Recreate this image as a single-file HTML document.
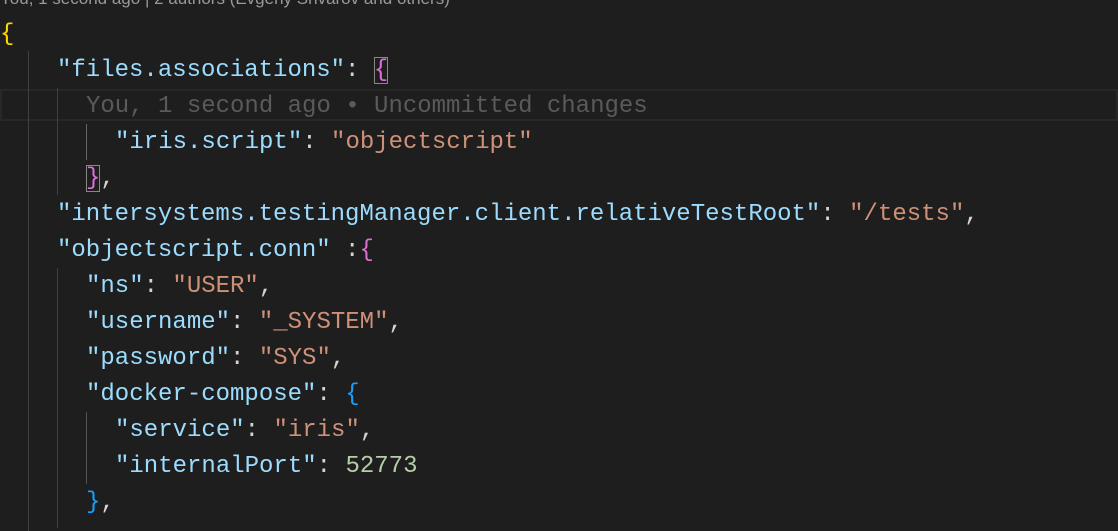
<!DOCTYPE html>
<html><head><style>
body{margin:0;width:1118px;height:524px;background:#1e1e1e;overflow:hidden;position:relative;font-family:"Liberation Mono",monospace;font-size:24px;}
.l{position:absolute;left:0;height:36px;line-height:36px;white-space:pre;color:#d4d4d4;margin-top:2px}
.k{color:#9cdcfe}.s{color:#ce9178}.n{color:#b5cea8}.y{color:#ffd700}.p{color:#da70d6}.b{color:#179fff}
.g{position:absolute;width:1px;background:#404040}
.box{outline:1px solid #888;outline-offset:-1px}
.top{position:absolute;left:0;top:-11px;font-family:"Liberation Sans",sans-serif;font-size:17px;color:#999;white-space:pre}
</style></head><body>
<div class="top">You, 1 second ago | 2 authors (Evgeny Shvarov and others)</div>
<div style="position:absolute;left:0;top:89px;width:1118px;height:32px;border:2px solid #282828;box-sizing:border-box"></div>
<div class="g" style="left:28px;top:51px;height:480px"></div>
<div class="g" style="left:57px;top:88px;height:107px"></div>
<div class="g" style="left:86px;top:124px;height:36px;background:#666"></div>
<div class="g" style="left:57px;top:268px;height:260px"></div>
<div class="g" style="left:86px;top:412px;height:72px;background:#555"></div>
<div class="l" style="top:15px"><span class="y">{</span></div>
<div class="l" style="top:51px;left:57px"><span class="k">"files.associations"</span>: <span class="p box">{</span></div>
<div class="l" style="top:87px;left:86px;color:#5a5a5a">You, 1 second ago • Uncommitted changes</div>
<div class="l" style="top:123px;left:115px"><span class="k">"iris.script"</span>: <span class="s">"objectscript"</span></div>
<div class="l" style="top:159px;left:86px"><span class="p box">}</span>,</div>
<div class="l" style="top:195px;left:57px"><span class="k">"intersystems.testingManager.client.relativeTestRoot"</span>: <span class="s">"/tests"</span>,</div>
<div class="l" style="top:231px;left:57px"><span class="k">"objectscript.conn"</span> :<span class="p">{</span></div>
<div class="l" style="top:267px;left:86px"><span class="k">"ns"</span>: <span class="s">"USER"</span>,</div>
<div class="l" style="top:303px;left:86px"><span class="k">"username"</span>: <span class="s">"_SYSTEM"</span>,</div>
<div class="l" style="top:339px;left:86px"><span class="k">"password"</span>: <span class="s">"SYS"</span>,</div>
<div class="l" style="top:375px;left:86px"><span class="k">"docker-compose"</span>: <span class="b">{</span></div>
<div class="l" style="top:411px;left:115px"><span class="k">"service"</span>: <span class="s">"iris"</span>,</div>
<div class="l" style="top:447px;left:115px"><span class="k">"internalPort"</span>: <span class="n">52773</span></div>
<div class="l" style="top:483px;left:86px"><span class="b">}</span>,</div>
</body></html>
